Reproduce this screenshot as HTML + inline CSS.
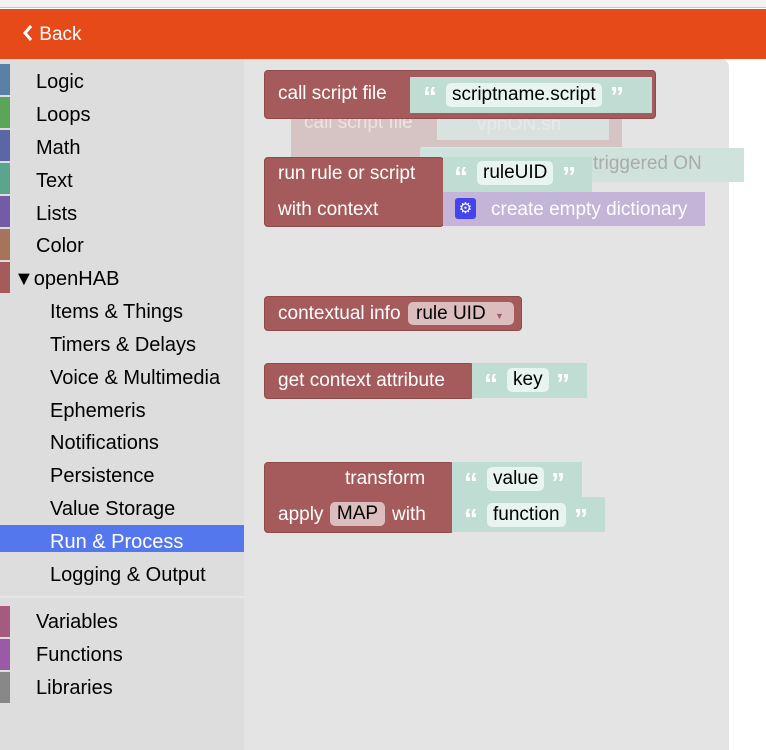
<!DOCTYPE html><html><head><style>
*{margin:0;padding:0;box-sizing:border-box}
body{width:766px;height:750px;position:relative;background:#fff;font-family:"Liberation Sans",sans-serif;overflow:hidden}
.a{position:absolute}
.side{left:0;top:59px;width:244px;height:691px;background:#dddddd}
.ws{left:244px;top:59px;width:485px;height:691px;background:#e4e4e4;border-top-right-radius:8px}
.it{position:absolute;left:36px;font-size:20px;color:#000;white-space:nowrap}
.sub{left:50px}
.sw{position:absolute;left:0;width:10px;height:31px}
.b{position:absolute;background:#a55b5b;color:#fff;font-size:19px;border:1px solid #8c4a4a;border-radius:4px}
.g{position:absolute;background:#bfddd3;font-size:19px}
.p{position:absolute;background:#c3b4d8;color:#fff;font-size:19px}
.f{position:absolute;background:#e8f4f0;color:#000;border-radius:5px;padding:0 6px;height:24px;line-height:24px}
.q{position:absolute;color:#fff;font-weight:bold;font-size:28px;line-height:28px;font-family:"Liberation Sans",sans-serif}
.t{position:absolute;white-space:nowrap;font-size:19px}
</style></head><body>
<div class="a" style="left:0;top:0;width:766px;height:8px;background:#f2f2f2;border-bottom:1px solid #c8c8c8"></div>
<div class="a" style="left:0;top:9px;width:766px;height:50px;background:#e64a19"></div>
<div class="a" style="left:22px;top:24px;color:#fff;font-size:19px"><svg width="12" height="18" style="vertical-align:-2px" viewBox="0 0 12 18"><path d="M9 2L3 9L9 16" stroke="#fff" stroke-width="3" fill="none"/></svg> Back</div>
<div class="a side"></div>
<div class="a ws"></div>
<div class="sw" style="top:64px;background:#5b80a5"></div>
<div class="sw" style="top:97px;background:#5ba55b"></div>
<div class="sw" style="top:130px;background:#5b67a5"></div>
<div class="sw" style="top:163px;background:#5ba58c"></div>
<div class="sw" style="top:196px;background:#745ba5"></div>
<div class="sw" style="top:229px;background:#a5745b"></div>
<div class="sw" style="top:262px;background:#a55b5b"></div>
<div class="sw" style="top:606px;background:#a55b80"></div>
<div class="sw" style="top:639px;background:#995ba5"></div>
<div class="sw" style="top:672px;background:#888"></div>
<div class="a" style="left:0;top:525px;width:244px;height:27px;background:#5577ee"></div>
<div class="a" style="left:0;top:596px;width:244px;height:2px;background:#e6e6e6"></div>
<div class="it" style="top:71px">Logic</div>
<div class="it" style="top:104px">Loops</div>
<div class="it" style="top:137px">Math</div>
<div class="it" style="top:170px">Text</div>
<div class="it" style="top:203px">Lists</div>
<div class="it" style="top:235px">Color</div>
<div class="it" style="top:268px;left:14px">▼openHAB</div>
<div class="it sub" style="top:301px">Items &amp; Things</div>
<div class="it sub" style="top:334px">Timers &amp; Delays</div>
<div class="it sub" style="top:367px">Voice &amp; Multimedia</div>
<div class="it sub" style="top:400px">Ephemeris</div>
<div class="it sub" style="top:432px">Notifications</div>
<div class="it sub" style="top:465px">Persistence</div>
<div class="it sub" style="top:498px">Value Storage</div>
<div class="it sub" style="top:531px;color:#fff">Run &amp; Process</div>
<div class="it sub" style="top:564px">Logging &amp; Output</div>
<div class="it" style="top:611px">Variables</div>
<div class="it" style="top:644px">Functions</div>
<div class="it" style="top:677px">Libraries</div>

<!-- ghost blocks -->
<div class="a" style="left:291px;top:110px;width:331px;height:37px;background:#d6c3c3"></div>
<div class="a" style="left:437px;top:118px;width:172px;height:22px;background:#d9e2df"></div>
<div class="t" style="left:304px;top:112px;color:#ece3e3">call script file</div>
<div class="t" style="left:477px;top:114px;color:#e8e8e8">vpnON.sh</div>
<div class="a" style="left:291px;top:147px;width:130px;height:12px;background:#d6c3c3"></div>
<div class="a" style="left:420px;top:148px;width:324px;height:34px;background:#cfe3dc"></div>
<div class="t" style="left:593px;top:153px;color:#aaa">triggered ON</div>

<!-- call script file -->
<div class="b" style="left:264px;top:70px;width:392px;height:49px"></div>
<div class="t" style="left:278px;top:83px;color:#fff">call script file</div>
<div class="g" style="left:410px;top:77px;width:242px;height:36px"></div>
<div class="q" style="left:423px;top:83px">“</div>
<div class="f" style="left:446px;top:83px;font-size:19px">scriptname.script</div>
<div class="q" style="left:610px;top:83px">”</div>

<!-- run rule -->
<div class="b" style="left:264px;top:157px;width:180px;height:70px"></div>
<div class="t" style="left:278px;top:163px;color:#fff">run rule or script</div>
<div class="t" style="left:278px;top:199px;color:#fff">with context</div>
<div class="g" style="left:443px;top:157px;width:149px;height:35px"></div>
<div class="q" style="left:454px;top:163px">“</div>
<div class="f" style="left:477px;top:161px;font-size:19px">ruleUID</div>
<div class="q" style="left:562px;top:163px">”</div>
<div class="p" style="left:443px;top:192px;width:262px;height:34px"></div>
<div class="a" style="left:455px;top:198px;width:21px;height:21px;background:#4444ee;border-radius:3px;color:#fff;font-size:15px;text-align:center;line-height:21px">⚙</div>
<div class="t" style="left:491px;top:199px;color:#fff">create empty dictionary</div>

<!-- contextual info -->
<div class="b" style="left:264px;top:296px;width:258px;height:35px"></div>
<div class="t" style="left:278px;top:303px;color:#fff">contextual info</div>
<div class="a" style="left:408px;top:302px;width:106px;height:23px;background:#dbbdbd;border-radius:5px;font-size:19px;padding-left:8px;line-height:23px">rule UID <span style="font-size:9px;color:#a55b5b;margin-left:4px">▼</span></div>

<!-- get context attribute -->
<div class="b" style="left:264px;top:363px;width:210px;height:36px"></div>
<div class="t" style="left:278px;top:370px;color:#fff">get context attribute</div>
<div class="g" style="left:472px;top:363px;width:115px;height:35px"></div>
<div class="q" style="left:484px;top:370px">“</div>
<div class="f" style="left:507px;top:368px;font-size:19px">key</div>
<div class="q" style="left:556px;top:370px">”</div>

<!-- transform -->
<div class="b" style="left:264px;top:462px;width:190px;height:71px"></div>
<div class="t" style="left:345px;top:468px;color:#fff">transform</div>
<div class="t" style="left:278px;top:504px;color:#fff">apply</div>
<div class="a" style="left:330px;top:502px;width:55px;height:24px;background:#dbbdbd;border-radius:5px;font-size:19px;text-align:center;line-height:24px">MAP</div>
<div class="t" style="left:392px;top:504px;color:#fff">with</div>
<div class="g" style="left:452px;top:462px;width:130px;height:35px"></div>
<div class="q" style="left:464px;top:469px">“</div>
<div class="f" style="left:487px;top:467px;font-size:19px">value</div>
<div class="q" style="left:551px;top:469px">”</div>
<div class="g" style="left:452px;top:497px;width:153px;height:35px"></div>
<div class="q" style="left:464px;top:505px">“</div>
<div class="f" style="left:487px;top:503px;font-size:19px">function</div>
<div class="q" style="left:574px;top:505px">”</div>
</body></html>
